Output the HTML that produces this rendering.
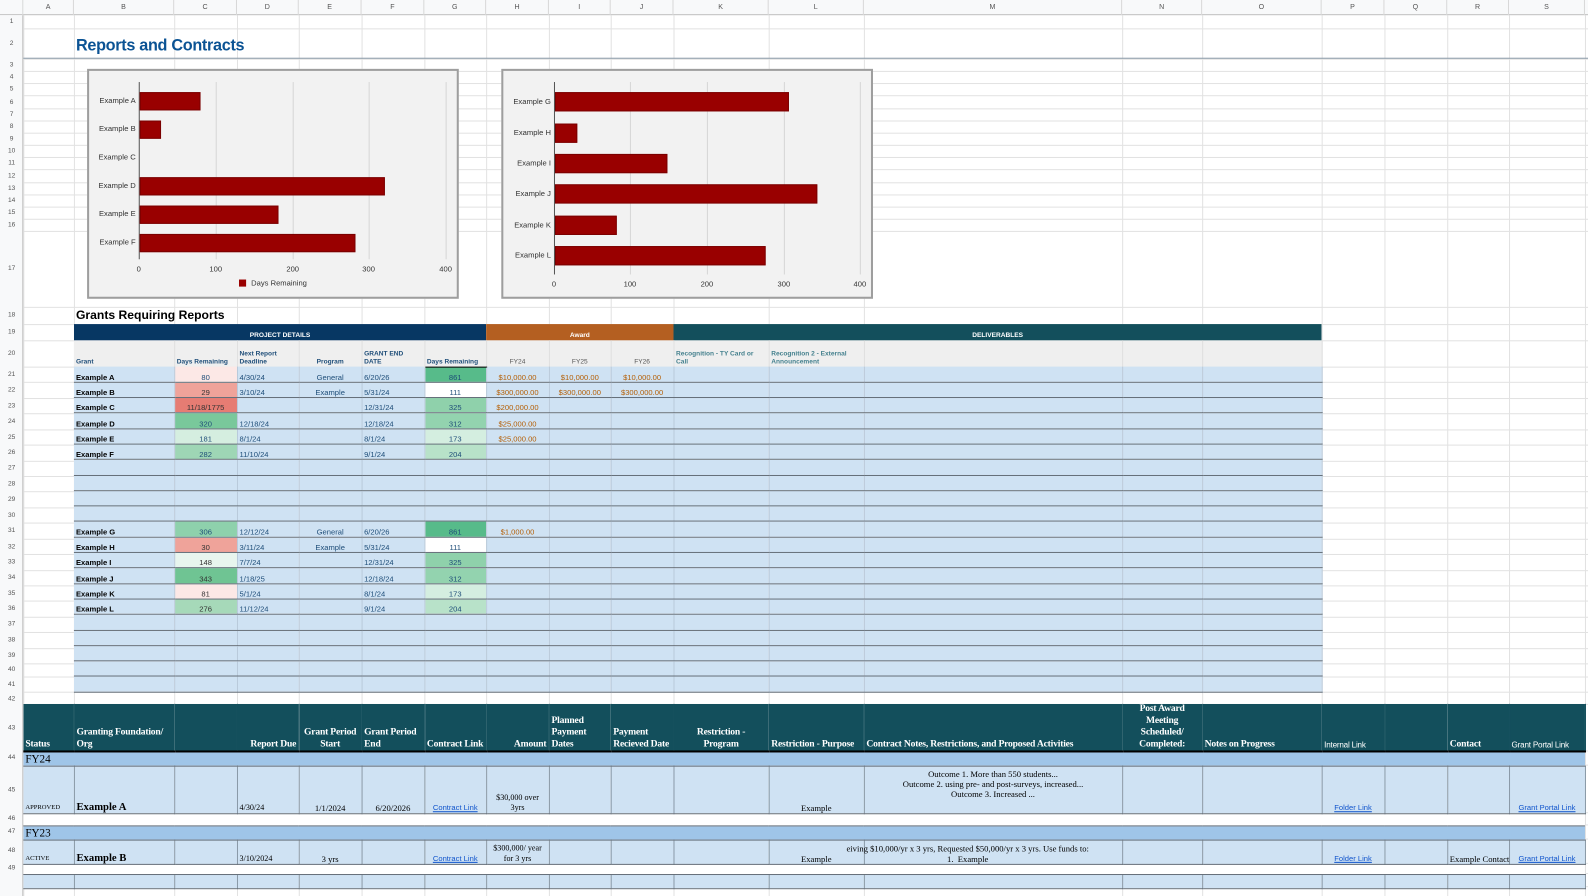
<!DOCTYPE html>
<html><head><meta charset="utf-8"><style>
*{margin:0;padding:0;box-sizing:border-box}
body{width:1588px;height:885px;overflow:hidden;background:#fff;font-family:"Liberation Sans",sans-serif;position:relative}
#w{position:absolute;left:0;top:0;width:1568px;height:874px;transform:scale(1.01276);transform-origin:0 0}
.a{position:absolute}
#colh{position:absolute;left:0;top:0;width:1588px;height:15px;background:#f8f9fa;border-bottom:1px solid #c0c0c0}
.ch{position:absolute;top:0;height:15px;font-size:7px;color:#555;text-align:center;line-height:15px;border-right:1px solid #d8d8d8}
#rowh{position:absolute;left:0;top:15px;width:23px;height:870px;background:#f8f9fa;border-right:1px solid #c0c0c0}
.rn{position:absolute;left:0;width:23px;font-size:6.5px;color:#555;text-align:center;transform:translateY(-50%)}
.chart{position:absolute;background:#f2f2f2;border:2px solid #9e9e9e}
.bar{position:absolute;background:#990000;border:1px solid #7a0000}
.gl{position:absolute;width:1px;background:#d6d6d6}
.lbl{position:absolute;font-size:7.5px;color:#333;text-align:right;transform:translateY(-50%)}
.tk{position:absolute;font-size:7.5px;color:#333;transform:translateX(-50%)}
table{border-collapse:collapse;table-layout:fixed;position:absolute}
#g td{font-size:7.5px;color:#1f4e79;padding:0 2px;vertical-align:bottom;white-space:nowrap;overflow:hidden;border-right:1px solid #b9cadb;border-bottom:1px solid #66707a;background:#cfe2f3;line-height:9px}
#g tr.r td{height:15.3px}
#g td.n{font-weight:bold;color:#000}
#g td.ct{text-align:center}
#g td.m{color:#b45f06}
#g tr.h td{background:#efefef;font-weight:bold;font-size:6.5px;color:#1f4e79;border-bottom:none;border-right:1px solid #e0e0e0;white-space:normal;line-height:8px;height:26px}
#g tr.b td{height:16px;color:#fff;font-weight:bold;font-size:6.5px;text-align:center;border:none;line-height:8px}
#b td{font-family:"Liberation Serif",serif;font-size:8.5px;color:#000;vertical-align:bottom;border-right:1px solid #8a9aa8;padding:0 2px;white-space:nowrap;overflow:hidden;line-height:10px}
#b tr.hd td{background:#134f5c;color:#fff;font-weight:bold;font-size:9.5px;letter-spacing:-0.2px;height:46px;white-space:normal;border-bottom:2px solid #000;border-right:1px solid #134f5c;line-height:11.5px}
#b tr.fy td{background:#9fc5e8;height:14px;border-right:none;border-bottom:1px solid #66707a;font-size:11px;line-height:12px}
#b tr.dr td{background:#cfe2f3;border-bottom:1px solid #66707a}
#b tr.wh td{background:#fff;border-right:1px solid #e2e2e2;border-bottom:1px solid #66707a}
.lk{color:#1155cc;text-decoration:underline;font-family:"Liberation Sans",sans-serif;font-size:7.5px}
</style></head><body>
<div id="w">
<div id="grid"></div>
<div id="colh">
<div class="ch" style="left:0;width:23px"></div>
<div class="ch" style="left:23px;width:50px">A</div><div class="ch" style="left:73px;width:99px">B</div><div class="ch" style="left:172px;width:62px">C</div><div class="ch" style="left:234px;width:61px">D</div><div class="ch" style="left:295px;width:62px">E</div><div class="ch" style="left:357px;width:62px">F</div><div class="ch" style="left:419px;width:61px">G</div><div class="ch" style="left:480px;width:62px">H</div><div class="ch" style="left:542px;width:61px">I</div><div class="ch" style="left:603px;width:62px">J</div><div class="ch" style="left:665px;width:94px">K</div><div class="ch" style="left:759px;width:94px">L</div><div class="ch" style="left:853px;width:255px">M</div><div class="ch" style="left:1108px;width:79px">N</div><div class="ch" style="left:1187px;width:118px">O</div><div class="ch" style="left:1305px;width:62px">P</div><div class="ch" style="left:1367px;width:62px">Q</div><div class="ch" style="left:1429px;width:61px">R</div><div class="ch" style="left:1490px;width:75px">S</div>
</div>
<div id="rowh"></div>

<div class="a" style="left:75px;top:37px;font-size:16px;font-weight:bold;color:#0b5394;letter-spacing:-0.3px">Reports and Contracts</div>
<div class="a" style="left:23px;top:57px;width:1565px;height:1px;background:#8a9aa8"></div>

<!-- chart 1 -->
<div class="chart" style="left:86px;top:68px;width:367px;height:227px"></div>
<div class="gl" style="left:137px;top:81px;height:175px;background:#555"></div>
<div class="gl" style="left:213px;top:81px;height:175px"></div>
<div class="gl" style="left:289px;top:81px;height:175px"></div>
<div class="gl" style="left:364px;top:81px;height:175px"></div>
<div class="gl" style="left:440px;top:81px;height:175px"></div>
<div class="lbl" style="left:60px;width:74px;top:99px">Example A</div>
<div class="lbl" style="left:60px;width:74px;top:127px">Example B</div>
<div class="lbl" style="left:60px;width:74px;top:155px">Example C</div>
<div class="lbl" style="left:60px;width:74px;top:183px">Example D</div>
<div class="lbl" style="left:60px;width:74px;top:211px">Example E</div>
<div class="lbl" style="left:60px;width:74px;top:239px">Example F</div>
<div class="bar" style="left:138px;top:91px;width:60px;height:18px"></div>
<div class="bar" style="left:138px;top:119px;width:21px;height:18px"></div>
<div class="bar" style="left:138px;top:175px;width:242px;height:18px"></div>
<div class="bar" style="left:138px;top:203px;width:137px;height:18px"></div>
<div class="bar" style="left:138px;top:231px;width:213px;height:18px"></div>
<div class="tk" style="left:137px;top:261px">0</div><div class="tk" style="left:213px;top:261px">100</div><div class="tk" style="left:289px;top:261px">200</div><div class="tk" style="left:364px;top:261px">300</div><div class="tk" style="left:440px;top:261px">400</div>
<div class="a" style="left:236px;top:276px;width:7px;height:7px;background:#990000"></div>
<div class="a" style="left:248px;top:275px;font-size:7.5px;color:#333">Days Remaining</div>

<!-- chart 2 -->
<div class="chart" style="left:495px;top:68px;width:367px;height:227px"></div>
<div class="gl" style="left:547px;top:81px;height:190px;background:#555"></div>
<div class="gl" style="left:622px;top:81px;height:190px"></div>
<div class="gl" style="left:698px;top:81px;height:190px"></div>
<div class="gl" style="left:774px;top:81px;height:190px"></div>
<div class="gl" style="left:849px;top:81px;height:190px"></div>
<div class="lbl" style="left:470px;width:74px;top:100px">Example G</div>
<div class="lbl" style="left:470px;width:74px;top:131px">Example H</div>
<div class="lbl" style="left:470px;width:74px;top:161px">Example I</div>
<div class="lbl" style="left:470px;width:74px;top:191px">Example J</div>
<div class="lbl" style="left:470px;width:74px;top:222px">Example K</div>
<div class="lbl" style="left:470px;width:74px;top:252px">Example L</div>
<div class="bar" style="left:548px;top:91px;width:231px;height:19px"></div>
<div class="bar" style="left:548px;top:122px;width:22px;height:19px"></div>
<div class="bar" style="left:548px;top:152px;width:111px;height:19px"></div>
<div class="bar" style="left:548px;top:182px;width:259px;height:19px"></div>
<div class="bar" style="left:548px;top:213px;width:61px;height:19px"></div>
<div class="bar" style="left:548px;top:243px;width:208px;height:19px"></div>
<div class="tk" style="left:547px;top:276px">0</div><div class="tk" style="left:622px;top:276px">100</div><div class="tk" style="left:698px;top:276px">200</div><div class="tk" style="left:774px;top:276px">300</div><div class="tk" style="left:849px;top:276px">400</div>

<div class="a" style="left:75px;top:304px;font-size:12px;font-weight:bold;color:#000">Grants Requiring Reports</div>

<table id="g" style="left:73px;top:320px;width:1232px">
<colgroup><col style="width:99px"><col style="width:62px"><col style="width:61px"><col style="width:62px"><col style="width:62px"><col style="width:61px"><col style="width:62px"><col style="width:61px"><col style="width:62px"><col style="width:94px"><col style="width:94px"><col style="width:255px"><col style="width:79px"><col style="width:118px"></colgroup>
<tr class="b"><td colspan="6" style="background:#073763">PROJECT DETAILS</td><td colspan="3" style="background:#b45f21">Award</td><td colspan="5" style="background:#134f5c">DELIVERABLES</td></tr>
<tr class="h"><td>Grant</td><td>Days Remaining</td><td>Next Report Deadline</td><td style="text-align:center">Program</td><td>GRANT END DATE</td><td style="border-bottom:1px solid #000">Days Remaining</td><td style="text-align:center;font-weight:normal;color:#555">FY24</td><td style="text-align:center;font-weight:normal;color:#555">FY25</td><td style="text-align:center;font-weight:normal;color:#555">FY26</td><td style="color:#45818e">Recognition -  TY Card or Call</td><td style="color:#45818e">Recognition 2 - External Announcement</td><td></td><td></td><td></td></tr>
<tr class="r"><td class="n">Example A</td><td class="ct" style="background:#fce8e6">80</td><td>4/30/24</td><td class="ct">General</td><td>6/20/26</td><td class="ct" style="background:#57bb8a">861</td><td class="m ct">$10,000.00</td><td class="m ct">$10,000.00</td><td class="m ct">$10,000.00</td><td></td><td></td><td></td><td></td><td></td></tr>
<tr class="r"><td class="n">Example B</td><td class="ct" style="background:#efa39a;color:#333">29</td><td>3/10/24</td><td class="ct">Example</td><td>5/31/24</td><td class="ct" style="background:#fff">111</td><td class="m ct">$300,000.00</td><td class="m ct">$300,000.00</td><td class="m ct">$300,000.00</td><td></td><td></td><td></td><td></td><td></td></tr>
<tr class="r"><td class="n">Example C</td><td class="ct" style="background:#e67c73;color:#333">11/18/1775</td><td></td><td></td><td>12/31/24</td><td class="ct" style="background:#8fd1ab">325</td><td class="m ct">$200,000.00</td><td></td><td></td><td></td><td></td><td></td><td></td><td></td></tr>
<tr class="r"><td class="n">Example D</td><td class="ct" style="background:#79c89b">320</td><td>12/18/24</td><td></td><td>12/18/24</td><td class="ct" style="background:#93d3af">312</td><td class="m ct">$25,000.00</td><td></td><td></td><td></td><td></td><td></td><td></td><td></td></tr>
<tr class="r"><td class="n">Example E</td><td class="ct" style="background:#d5eee0">181</td><td>8/1/24</td><td></td><td>8/1/24</td><td class="ct" style="background:#d4eee0">173</td><td class="m ct">$25,000.00</td><td></td><td></td><td></td><td></td><td></td><td></td><td></td></tr>
<tr class="r"><td class="n">Example F</td><td class="ct" style="background:#9ed6b5">282</td><td>11/10/24</td><td></td><td>9/1/24</td><td class="ct" style="background:#b8e2c9">204</td><td></td><td></td><td></td><td></td><td></td><td></td><td></td><td></td></tr>
<tr class="r"><td></td><td></td><td></td><td></td><td></td><td></td><td></td><td></td><td></td><td></td><td></td><td></td><td></td><td></td></tr>
<tr class="r"><td></td><td></td><td></td><td></td><td></td><td></td><td></td><td></td><td></td><td></td><td></td><td></td><td></td><td></td></tr>
<tr class="r"><td></td><td></td><td></td><td></td><td></td><td></td><td></td><td></td><td></td><td></td><td></td><td></td><td></td><td></td></tr>
<tr class="r"><td></td><td></td><td></td><td></td><td></td><td></td><td></td><td></td><td></td><td></td><td></td><td></td><td></td><td></td></tr>
<tr class="r"><td class="n">Example G</td><td class="ct" style="background:#8ed1ac">306</td><td>12/12/24</td><td class="ct">General</td><td>6/20/26</td><td class="ct" style="background:#57bb8a">861</td><td class="m ct">$1,000.00</td><td></td><td></td><td></td><td></td><td></td><td></td><td></td></tr>
<tr class="r"><td class="n">Example H</td><td class="ct" style="background:#efa39a;color:#333">30</td><td>3/11/24</td><td class="ct">Example</td><td>5/31/24</td><td class="ct" style="background:#fff">111</td><td></td><td></td><td></td><td></td><td></td><td></td><td></td><td></td></tr>
<tr class="r"><td class="n">Example I</td><td class="ct" style="background:#e8f5ee;color:#333">148</td><td>7/7/24</td><td></td><td>12/31/24</td><td class="ct" style="background:#8fd1ab">325</td><td></td><td></td><td></td><td></td><td></td><td></td><td></td><td></td></tr>
<tr class="r"><td class="n">Example J</td><td class="ct" style="background:#6fc493;color:#333">343</td><td>1/18/25</td><td></td><td>12/18/24</td><td class="ct" style="background:#93d3af">312</td><td></td><td></td><td></td><td></td><td></td><td></td><td></td><td></td></tr>
<tr class="r"><td class="n">Example K</td><td class="ct" style="background:#fce8e6;color:#333">81</td><td>5/1/24</td><td></td><td>8/1/24</td><td class="ct" style="background:#d4eee0">173</td><td></td><td></td><td></td><td></td><td></td><td></td><td></td><td></td></tr>
<tr class="r"><td class="n">Example L</td><td class="ct" style="background:#a6d9b9;color:#333">276</td><td>11/12/24</td><td></td><td>9/1/24</td><td class="ct" style="background:#b8e2c9">204</td><td></td><td></td><td></td><td></td><td></td><td></td><td></td><td></td></tr>
<tr class="r"><td></td><td></td><td></td><td></td><td></td><td></td><td></td><td></td><td></td><td></td><td></td><td></td><td></td><td></td></tr>
<tr class="r"><td></td><td></td><td></td><td></td><td></td><td></td><td></td><td></td><td></td><td></td><td></td><td></td><td></td><td></td></tr>
<tr class="r"><td></td><td></td><td></td><td></td><td></td><td></td><td></td><td></td><td></td><td></td><td></td><td></td><td></td><td></td></tr>
<tr class="r"><td></td><td></td><td></td><td></td><td></td><td></td><td></td><td></td><td></td><td></td><td></td><td></td><td></td><td></td></tr>
<tr class="r"><td></td><td></td><td></td><td></td><td></td><td></td><td></td><td></td><td></td><td></td><td></td><td></td><td></td><td></td></tr>
</table>

<table id="b" style="left:23px;top:695px;width:1542px">
<colgroup><col style="width:50px"><col style="width:99px"><col style="width:62px"><col style="width:61px"><col style="width:62px"><col style="width:62px"><col style="width:61px"><col style="width:62px"><col style="width:61px"><col style="width:62px"><col style="width:94px"><col style="width:94px"><col style="width:255px"><col style="width:79px"><col style="width:118px"><col style="width:62px"><col style="width:62px"><col style="width:61px"><col style="width:75px"></colgroup>
<tr class="hd"><td>Status</td><td>Granting Foundation/ Org</td><td></td><td style="text-align:right">Report Due</td><td style="text-align:center">Grant Period Start</td><td>Grant Period End</td><td>Contract Link</td><td style="text-align:right">Amount</td><td>Planned Payment Dates</td><td>Payment Recieved Date</td><td style="text-align:center;padding:0 12px">Restriction - Program</td><td>Restriction - Purpose</td><td>Contract Notes, Restrictions, and Proposed Activities</td><td style="text-align:center">Post Award Meeting Scheduled/ Completed:</td><td>Notes on Progress</td><td style="border-left:1px solid #000;font-family:'Liberation Sans',sans-serif;font-weight:normal;font-size:8px">Internal Link</td><td style="border-left:1px solid #000"></td><td style="border-left:1px solid #000">Contact</td><td style="border-left:1px solid #000;font-family:'Liberation Sans',sans-serif;font-weight:normal;font-size:8px">Grant Portal Link</td></tr>
<tr class="fy"><td colspan="19">FY24</td></tr>
<tr class="dr" style="height:47px"><td style="font-size:6.5px">APPROVED</td><td style="font-weight:bold;font-size:10.5px">Example A</td><td></td><td style="font-size:8px">4/30/24</td><td style="text-align:center">1/1/2024</td><td style="text-align:center">6/20/2026</td><td style="text-align:center"><span class="lk">Contract Link</span></td><td style="text-align:center;white-space:normal;font-size:8px">$30,000 over 3yrs</td><td></td><td></td><td></td><td style="text-align:center">Example</td><td style="text-align:center;vertical-align:top;padding-top:2px">Outcome 1. More than 550 students...<br>Outcome 2. using pre- and post-surveys, increased...<br>Outcome 3. Increased ...</td><td></td><td></td><td style="text-align:center"><span class="lk">Folder Link</span></td><td></td><td></td><td style="text-align:center"><span class="lk">Grant Portal Link</span></td></tr>
<tr class="wh" style="height:12px"><td colspan="19" style="border-right:none"></td></tr>
<tr class="fy"><td colspan="19">FY23</td></tr>
<tr class="dr" style="height:24px"><td style="font-size:6.5px">ACTIVE</td><td style="font-weight:bold;font-size:10.5px">Example B</td><td></td><td style="font-size:8px">3/10/2024</td><td style="text-align:center">3 yrs</td><td></td><td style="text-align:center"><span class="lk">Contract Link</span></td><td style="text-align:center;white-space:normal;font-size:8px">$300,000/ year for 3 yrs</td><td></td><td></td><td></td><td style="text-align:center">Example</td><td style="text-align:center;overflow:visible;direction:rtl"><div style="direction:ltr;margin-left:-40px;width:300px">eiving $10,000/yr x 3 yrs, Requested $50,000/yr x 3 yrs. Use funds to:<br>1.&nbsp; Example</div></td><td></td><td></td><td style="text-align:center"><span class="lk">Folder Link</span></td><td></td><td style="text-align:right;overflow:visible">Example Contact</td><td style="text-align:center"><span class="lk">Grant Portal Link</span></td></tr>
<tr class="wh" style="height:10px"><td colspan="19" style="border-right:none"></td></tr>
<tr class="dr" style="height:14px"><td></td><td></td><td></td><td></td><td></td><td></td><td></td><td></td><td></td><td></td><td></td><td></td><td></td><td></td><td></td><td></td><td></td><td></td><td></td></tr>
</table>

<div id="rnums">
<div class="rn" style="top:21px">1</div><div class="rn" style="top:43px">2</div><div class="rn" style="top:64px">3</div><div class="rn" style="top:76px">4</div><div class="rn" style="top:88px">5</div><div class="rn" style="top:101px">6</div><div class="rn" style="top:113px">7</div><div class="rn" style="top:125px">8</div><div class="rn" style="top:137px">9</div><div class="rn" style="top:149px">10</div><div class="rn" style="top:161px">11</div><div class="rn" style="top:174px">12</div><div class="rn" style="top:186px">13</div><div class="rn" style="top:198px">14</div><div class="rn" style="top:210px">15</div><div class="rn" style="top:222px">16</div><div class="rn" style="top:265px">17</div><div class="rn" style="top:311px">18</div><div class="rn" style="top:328px">19</div><div class="rn" style="top:349px">20</div>
<div class="rn" style="top:370px">21</div><div class="rn" style="top:385px">22</div><div class="rn" style="top:401px">23</div><div class="rn" style="top:416px">24</div><div class="rn" style="top:432px">25</div><div class="rn" style="top:447px">26</div><div class="rn" style="top:462px">27</div><div class="rn" style="top:478px">28</div><div class="rn" style="top:493px">29</div><div class="rn" style="top:509px">30</div><div class="rn" style="top:524px">31</div><div class="rn" style="top:540px">32</div><div class="rn" style="top:555px">33</div><div class="rn" style="top:570px">34</div><div class="rn" style="top:586px">35</div><div class="rn" style="top:601px">36</div><div class="rn" style="top:616px">37</div><div class="rn" style="top:632px">38</div><div class="rn" style="top:647px">39</div><div class="rn" style="top:661px">40</div><div class="rn" style="top:676px">41</div><div class="rn" style="top:690px">42</div><div class="rn" style="top:719px">43</div><div class="rn" style="top:748px">44</div><div class="rn" style="top:780px">45</div><div class="rn" style="top:808px">46</div><div class="rn" style="top:821px">47</div><div class="rn" style="top:840px">48</div><div class="rn" style="top:857px">49</div>
</div>
</div>
<script>
var g=document.getElementById('grid'),h='';
[23,73,172,234,295,357,419,480,542,603,665,759,853,1108,1187,1305,1367,1429,1490,1565].forEach(function(x){h+='<div class="a" style="left:'+x+'px;top:15px;width:1px;height:870px;background:#e2e2e2"></div>'});
[28,58,70,82,94,107,119,131,143,155,167,180,192,204,216,228,303,320,336,362,377,393,408,424,439,455,470,485,501,516,532,547,563,578,593,609,624,640,655,668,683,695,741,755,802,814,828,852,862,875].forEach(function(y){h+='<div class="a" style="left:0;top:'+y+'px;width:1588px;height:1px;background:#e2e2e2"></div>'});
g.innerHTML=h;
</script>
</body></html>
